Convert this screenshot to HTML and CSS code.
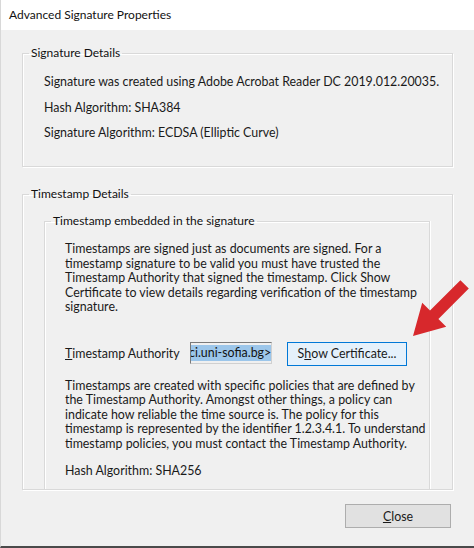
FILE: index.html
```html
<!DOCTYPE html>
<html>
<head>
<meta charset="utf-8">
<link rel="stylesheet" href="styles.css">
</head>
<body>
<div class="window">
  <div class="titlebar">Advanced Signature Properties</div>
  <div class="client">
    <fieldset class="group sig">
      <legend>Signature Details</legend>
      <div class="line">Signature was created using Adobe Acrobat Reader DC 2019.012.20035.</div>
      <div class="line">Hash Algorithm: SHA384</div>
      <div class="line">Signature Algorithm: ECDSA (Elliptic Curve)</div>
    </fieldset>
    <fieldset class="group ts">
      <legend>Timestamp Details</legend>
      <fieldset class="group inner">
        <legend>Timestamp embedded in the signature</legend>
        <p class="para">Timestamps are signed just as documents are signed. For a<br>timestamp signature to be valid you must have trusted the<br>Timestamp Authority that signed the timestamp. Click Show<br>Certificate to view details regarding verification of the timestamp<br>signature.</p>
        <div class="authrow">
          <span class="label"><u>T</u>imestamp Authority</span>
          <div class="input"><span class="sel">ci.uni-sofia.bg&gt;</span></div>
          <div class="btn show">S<u>h</u>ow Certificate...</div>
        </div>
        <p class="para p2">Timestamps are created with specific policies that are defined by<br>the Timestamp Authority. Amongst other things, a policy can<br>indicate how reliable the time source is. The policy for this<br>timestamp is represented by the identifier 1.2.3.4.1. To understand<br>timestamp policies, you must contact the Timestamp Authority.</p>
        <div class="hash2">Hash Algorithm: SHA256</div>
      </fieldset>
    </fieldset>
    <div class="footer">
      <div class="btn close"><u>C</u>lose</div>
    </div>
  </div>
  <svg class="arrow" width="74" height="76" viewBox="0 0 74 76">
    <polygon points="12,66 45.2,56.8 37.4,49 67.8,18.6 59.4,10.2 29,40.6 21.2,32.8" fill="#d7282c"/>
  </svg>
</div>
</body>
</html>
```
FILE: styles.css
```css
html, body {
  margin: 0;
  padding: 0;
}
body {
  width: 474px;
  height: 548px;
  overflow: hidden;
  background: #f0f0f0;
  font-family: "Lato", "Open Sans", sans-serif;
  font-size: 12.4px;
  color: #1a1a1a;
}
.window {
  position: relative;
  width: 474px;
  height: 548px;
  box-sizing: border-box;
  border-left: 1px solid #d8d8d8;
  border-bottom: 2px solid #4a4a4a;
}
.titlebar {
  height: 30px;
  background: #ffffff;
  line-height: 30px;
  padding-left: 8px;
  font-size: 12px;
  color: #111;
}
.client {
  padding: 15px 21px 0 21px;
}
.group {
  margin: 0;
  border: 1px solid #d9d9d9;
  box-shadow: inset 1px 1px 0 #ffffff, 1px 1px 0 #ffffff;
  padding: 0;
  min-width: 0;
}
.group > legend {
  padding: 0 2px;
  line-height: 16px;
  font-size: 12px;
  color: #111;
}
.sig {
  height: 122px;
  padding: 13px 0 0 21px;
  box-sizing: border-box;
}
.sig > legend,
.ts > legend {
  margin-left: -15px;
}
.sig .line {
  line-height: 16px;
  margin-bottom: 9.5px;
}
.ts {
  margin-top: 19px;
  padding: 11px 22px 0 21px;
  border-bottom: 1px solid #d9d9d9;
  height: 304px;
  box-sizing: border-box;
}
.inner {
  border-bottom: none;
  height: 276px;
  padding: 13px 0 0 20px;
  box-sizing: border-box;
  box-shadow: inset 1px 1px 0 #ffffff, 1px 0 0 #ffffff;
}
.inner > legend {
  margin-left: -14px;
}
.para {
  margin: 0;
  line-height: 14.5px;
  white-space: nowrap;
}
.authrow {
  display: flex;
  align-items: center;
  margin-top: 27px;
  height: 24px;
}
.label {
  width: 125px;
}
.input {
  width: 80px;
  height: 20px;
  border: 1px solid #7a7a7a;
  border-color: #7a7a7a #d0d0d0 #d0d0d0 #7a7a7a;
  background: #f0f0f0;
  overflow: hidden;
  display: flex;
  align-items: center;
  margin-top: -1px;
}
.sel {
  background: #9cc6ea;
  white-space: nowrap;
  margin-left: -2px;
  line-height: 16px;
  color: #111;
}
.btn {
  box-sizing: border-box;
  display: flex;
  align-items: center;
  justify-content: center;
}
.show {
  margin-left: 15px;
  width: 120px;
  height: 24px;
  border: 1px solid #0078d7;
  background: #e5f1fb;
}
.p2 {
  margin-top: 13px;
}
.hash2 {
  margin-top: 12px;
  line-height: 16px;
}
.footer {
  display: flex;
  justify-content: flex-end;
  margin-top: 14px;
  padding-right: 2px;
}
.close {
  width: 106px;
  height: 24px;
  border: 1px solid #adadad;
  background: #e1e1e1;
}
.arrow {
  position: absolute;
  left: 400px;
  top: 270px;
}
```
